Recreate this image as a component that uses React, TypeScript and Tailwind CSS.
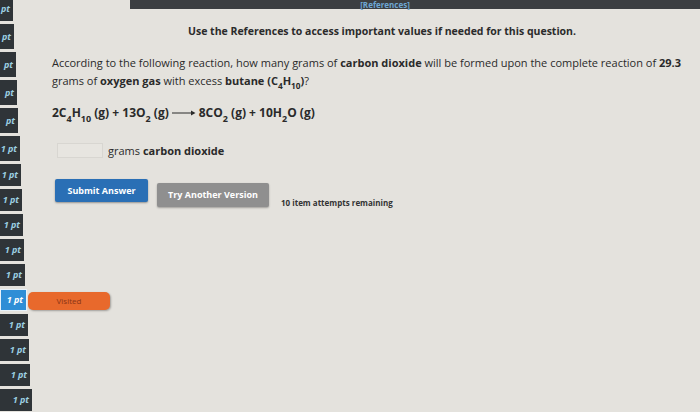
const tabs = [
  { w: "w-[13px]", h: "h-[25px]", label: "pt" },
  { w: "w-[14px]", h: "h-[25px]", label: "pt" },
  { w: "w-[16px]", h: "h-[25px]", label: "pt" },
  { w: "w-[17px]", h: "h-[25px]", label: "pt" },
  { w: "w-[18px]", h: "h-[25px]", label: "pt" },
  { w: "w-[20px]", h: "h-[25px]", label: "1 pt" },
  { w: "w-[21px]", h: "h-[22px]", label: "1 pt" },
  { w: "w-[22px]", h: "h-[22px]", label: "1 pt" },
  { w: "w-[23px]", h: "h-[22px]", label: "1 pt" },
  { w: "w-[24px]", h: "h-[22px]", label: "1 pt" },
  { w: "w-[25px]", h: "h-[22px]", label: "1 pt" },
  { w: "w-[27px]", h: "h-[22px]", label: "1 pt" },
  { w: "w-[28px]", h: "h-[22px]", label: "1 pt" },
  { w: "w-[29px]", h: "h-[22px]", label: "1 pt" },
  { w: "w-[30px]", h: "h-[22px]", label: "1 pt" },
  { w: "w-[32px]", h: "h-[22px]", label: "1 pt" },
];

const ACTIVE = 11;

function Sidebar() {
  return (
    <div className="flex flex-col gap-[3px] mt-[-4px] w-[40px] shrink-0">
      {tabs.map((t, i) => (
        <div
          key={i}
          className={`${t.w} ${t.h} flex items-center justify-end whitespace-nowrap pr-[3px] text-[9px] font-bold italic ${
            i === ACTIVE
              ? "bg-[#2f8ed6] text-white border border-[#e8f2fa]"
              : "bg-[#2f3438] text-[#9ccfe2]"
          }`}
        >
          {t.label}
        </div>
      ))}
    </div>
  );
}

function Sub({ children }: { children: React.ReactNode }) {
  return <sub className="text-[0.75em] leading-none align-[-0.3em]">{children}</sub>;
}

export default function App() {
  return (
    <div
      className="relative w-[700px] h-[412px] overflow-hidden bg-[#e4e2dd] flex text-[#2a2a2a]"
      style={{ fontFamily: '"Open Sans", "DejaVu Sans", sans-serif' }}
    >
      <Sidebar />

      <div className="flex-1 flex flex-col">
        <div className="ml-[90px] h-[9px] bg-[#3b3e41] flex justify-center items-center">
          <span className="text-[8px] leading-[9px] font-bold text-[#6ea6d2] ml-[-60px]">
            [References]
          </span>
        </div>

        <div className="mt-[15px] pl-[148px] text-[10.5px] font-bold text-[#2b2b2b]">
          Use the References to access important values if needed for this question.
        </div>

        <div className="mt-[14px] pl-[12px] w-[648px] text-[11px] leading-[18px]">
          According to the following reaction, how many grams of <b>carbon dioxide</b> will be
          formed upon the complete reaction of <b>29.3</b> grams of <b>oxygen gas</b> with excess{" "}
          <b>
            butane (C<Sub>4</Sub>H<Sub>10</Sub>)
          </b>
          ?
        </div>

        <div className="mt-[15px] pl-[12px] h-[16px] text-[12px] font-bold flex items-center">
          <span>
            2C<Sub>4</Sub>H<Sub>10</Sub> (g) + 13O<Sub>2</Sub> (g)
          </span>
          <svg width="26" height="8" viewBox="0 0 26 8" className="mx-[2px]">
            <line x1="1" y1="4" x2="23" y2="4" stroke="#2b2b2b" strokeWidth="1" />
            <path d="M20 1.5 L24.5 4 L20 6.5" fill="#2b2b2b" />
          </svg>
          <span>
            8CO<Sub>2</Sub> (g) + 10H<Sub>2</Sub>O (g)
          </span>
        </div>

        <div className="mt-[22px] pl-[17px] flex items-end gap-[5px]">
          <div className="w-[46px] h-[15px] border border-[#d8d6d1] bg-[#e7e5e0]" />
          <span className="text-[11px] leading-[14px]">
            grams <b>carbon dioxide</b>
          </span>
        </div>

        <div className="mt-[21px] pl-[15px] flex items-start">
          <button className="w-[93px] h-[23px] bg-[#2a6fb5] text-white text-[9px] font-bold rounded-[2px] shadow-[0_1px_2px_rgba(0,0,0,0.35)]">
            Submit Answer
          </button>
          <button className="ml-[9px] mt-[4px] w-[112px] h-[24px] bg-[#8f8f8f] text-white text-[9px] font-bold rounded-[2px] shadow-[0_1px_2px_rgba(0,0,0,0.3)]">
            Try Another Version
          </button>
          <span className="ml-[12px] mt-[19px] text-[8px] leading-[10px] font-bold text-[#333]">
            10 item attempts remaining
          </span>
        </div>
      </div>

      <div className="absolute left-[28px] top-[292px] w-[82px] h-[18px] bg-[#e8692c] rounded-[5px] shadow-[1px_1px_2px_rgba(0,0,0,0.3)] flex items-center justify-center">
        <span className="text-[8px] text-[#8a3516]">Visited</span>
      </div>
    </div>
  );
}
